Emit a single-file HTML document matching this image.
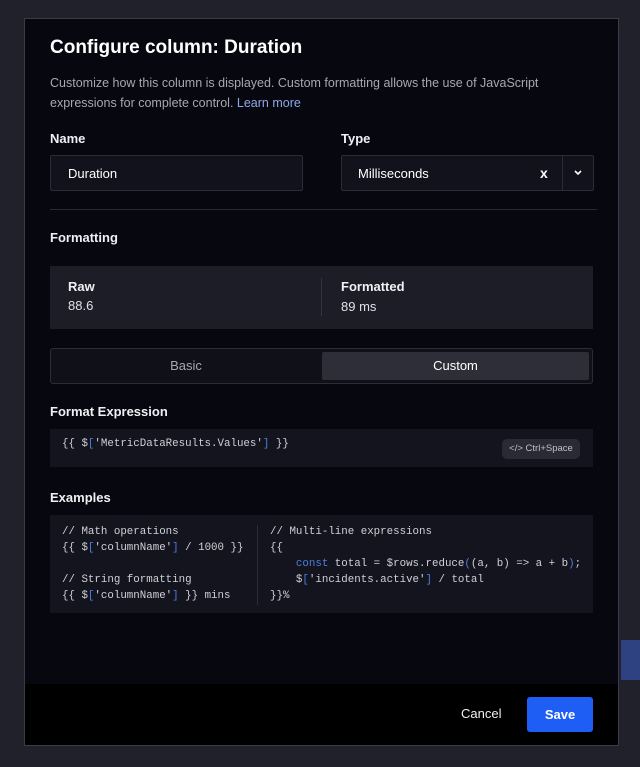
<!DOCTYPE html>
<html><head><meta charset="utf-8"><style>
*{margin:0;padding:0;box-sizing:border-box}
body{width:640px;height:767px;background:#21212c;font-family:"Liberation Sans",sans-serif;position:relative;overflow:hidden;color:#fff}
.m{position:absolute;left:24px;top:18px;width:595px;height:728px;background:#07070f;border:1px solid #3b3b48}
.a{position:absolute}
.mono{font-family:"Liberation Mono",monospace;font-size:10.8px;color:#d0d0d8}
.b{color:#4c7fe0}
.lbl{font-size:13px;font-weight:bold;color:#f0f0f4}
</style></head><body>
<div class="a" style="left:621px;top:640px;width:19px;height:40px;background:#3a5fc8;opacity:.55"></div>
<div class="m">
<div class="a" style="left:25px;top:18px;font-size:19px;font-weight:bold">Configure column: Duration</div>
<div class="a" style="left:25px;top:54px;width:540px;font-size:12.5px;line-height:20px;color:#a8a8b4">Customize how this column is displayed. Custom formatting allows the use of JavaScript expressions for complete control. <span style="color:#8fa8e8">Learn more</span></div>
<div class="a lbl" style="left:25px;top:112px">Name</div>
<div class="a lbl" style="left:316px;top:112px">Type</div>
<div class="a" style="left:25px;top:136px;width:253px;height:36px;background:#12121c;border:1px solid #2c2c38;border-radius:2px;font-size:13px;padding:10px 17px">Duration</div>
<div class="a" style="left:316px;top:136px;width:253px;height:36px;background:#12121c;border:1px solid #2c2c38;border-radius:2px;font-size:13px;padding:10px 16px">Milliseconds
<span class="a" style="left:198px;top:9px;font-weight:bold;font-size:14px">x</span>
<span class="a" style="left:220px;top:0;width:1px;height:34px;background:#2c2c38"></span>
<svg class="a" style="left:231px;top:13px" width="10" height="8" viewBox="0 0 10 8"><path d="M2 2l3 3 3-3" stroke="#fff" stroke-width="1.6" fill="none"/></svg></div>
<div class="a" style="left:25px;top:190px;width:547px;height:1px;background:#2a2a36"></div>
<div class="a lbl" style="left:25px;top:211px">Formatting</div>
<div class="a" style="left:25px;top:247px;width:543px;height:63px;background:#1d1d28">
<div class="a lbl" style="left:18px;top:13px">Raw</div>
<div class="a" style="left:18px;top:32px;font-size:13px;color:#e0e0e6">88.6</div>
<div class="a" style="left:271px;top:12px;width:1px;height:38px;background:#33333f"></div>
<div class="a lbl" style="left:291px;top:13px">Formatted</div>
<div class="a" style="left:291px;top:33px;font-size:13px;color:#e0e0e6">89 ms</div>
</div>
<div class="a" style="left:25px;top:329px;width:543px;height:36px;background:#101019;border:1px solid #2c2c38;border-radius:3px">
<div class="a" style="left:0;top:0;width:270px;height:34px;text-align:center;line-height:34px;font-size:13px;color:#a8a8b4">Basic</div>
<div class="a" style="left:271px;top:3px;width:267px;height:28px;background:#2e2e38;border-radius:2px;text-align:center;line-height:28px;font-size:13px">Custom</div>
</div>
<div class="a lbl" style="left:25px;top:385px">Format Expression</div>
<div class="a" style="left:25px;top:410px;width:543px;height:38px;background:#14141e">
<div class="a mono" style="left:12px;top:9px">{{ $<span class="b">[</span>'MetricDataResults.Values'<span class="b">]</span> }}</div>
<div class="a" style="left:452px;top:10px;width:78px;height:20px;background:#2a2a34;border-radius:5px;font-size:9.5px;color:#c0c0c8;line-height:20px;text-align:center">&lt;/&gt; Ctrl+Space</div>
</div>
<div class="a lbl" style="left:25px;top:471px">Examples</div>
<div class="a" style="left:25px;top:496px;width:543px;height:98px;background:#14141e">
<div class="a mono" style="left:12px;top:9px;line-height:16px;white-space:pre">// Math operations
{{ $<span class="b">[</span>'columnName'<span class="b">]</span> / 1000 }}

// String formatting
{{ $<span class="b">[</span>'columnName'<span class="b">]</span> }} mins</div>
<div class="a" style="left:207px;top:10px;width:1px;height:80px;background:#2c2c38"></div>
<div class="a mono" style="left:220px;top:9px;line-height:16px;white-space:pre">// Multi-line expressions
{{
    <span class="b">const</span> total = $rows.reduce<span class="b">(</span>(a, b) =&gt; a + b<span class="b">)</span>;
    $<span class="b">[</span>'incidents.active'<span class="b">]</span> / total
}}%</div>
</div>
<div class="a" style="left:0;top:665px;width:593px;height:61px;background:#000">
<div class="a" style="left:436px;top:22px;font-size:13px;color:#f0f0f0">Cancel</div>
<div class="a" style="left:502px;top:13px;width:66px;height:35px;background:#1f5ef5;border-radius:3px;text-align:center;line-height:35px;font-size:13px;font-weight:bold">Save</div>
</div>
</div>
</body></html>
